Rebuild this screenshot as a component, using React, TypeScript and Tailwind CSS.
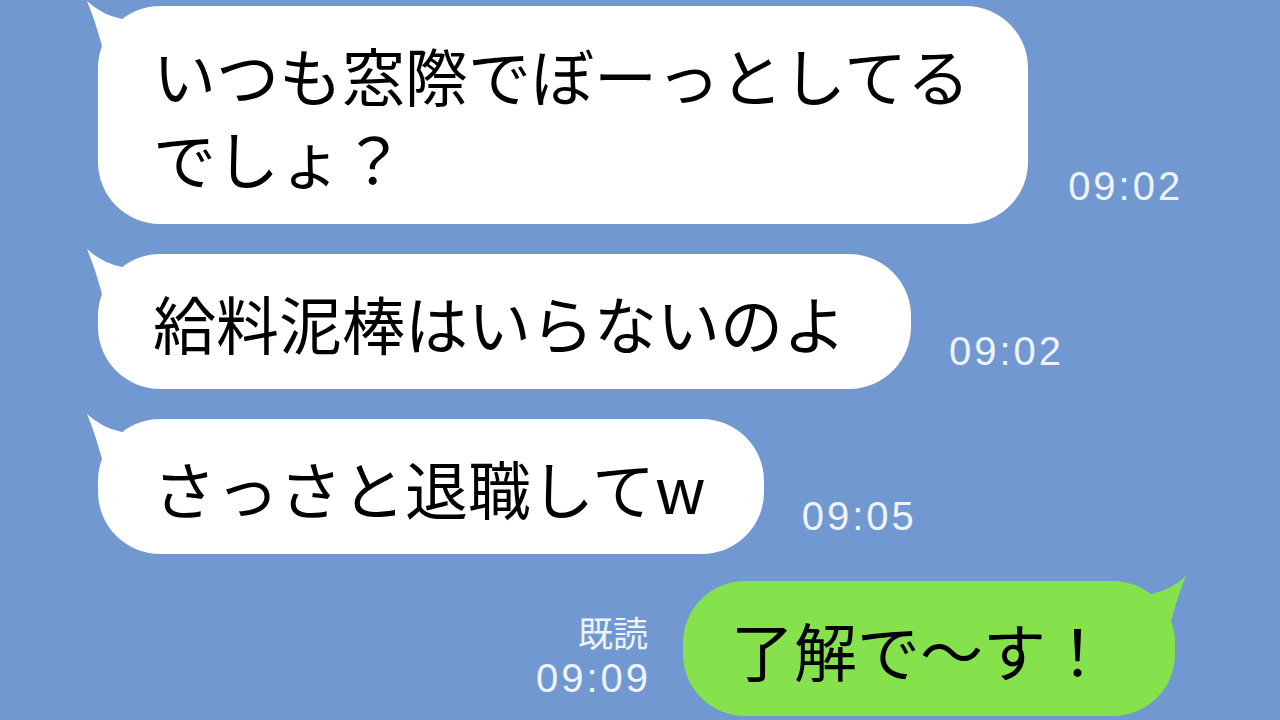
import type { ReactNode } from "react";

const JP = { fontFamily: '"Noto Sans CJK JP", "Noto Sans", sans-serif' };
const TIME = { fontFamily: '"Liberation Sans", "Noto Sans CJK JP", sans-serif' };

function Tail({ side, color }: { side: "left" | "right"; color: string }) {
  // little horn that sticks out of the top corner of a bubble
  const pos = side === "left" ? "left-[-14px] top-[-8px]" : "right-[-14px] top-[-8px] -scale-x-100";
  return (
    <svg className={`absolute h-[50px] w-[50px] ${pos}`} viewBox="0 0 50 50">
      <path d="M3 3 Q 18 17 38 21 L 40 40 L 18 48 Q 11 22 3 3 Z" fill={color} />
    </svg>
  );
}

function Bubble({
  children,
  side,
  pad = "pl-[55px] pr-[55px]",
}: {
  children: ReactNode;
  side: "left" | "right";
  pad?: string;
}) {
  const bg = side === "left" ? "bg-white" : "bg-[#86e24c]";
  return (
    <div
      className={`relative rounded-[62px] ${bg} ${pad} py-[26px] text-[63px] leading-[83px] text-black`}
      style={JP}
    >
      <Tail side={side} color={side === "left" ? "#ffffff" : "#86e24c"} />
      <span className="relative">{children}</span>
    </div>
  );
}

function Time({ t }: { t: string }) {
  return (
    <span className="mb-[18px] text-[40px] leading-[40px] tracking-[3px] text-[#eef3fb]" style={TIME}>
      {t}
    </span>
  );
}

export default function App() {
  return (
    <div className="h-[720px] w-[1280px] overflow-hidden bg-[#7198d0]">
      <div className="flex flex-col pl-[98px] pt-[6px]">
        <div className="flex items-end gap-[40px]">
          <Bubble side="left" pad="pl-[55px] pr-[58px]">
            いつも窓際でぼーっとしてる
            <br />
            でしょ？
          </Bubble>
          <Time t="09:02" />
        </div>

        <div className="mt-[30px] flex items-end gap-[38px]">
          <Bubble side="left" pad="pl-[55px] pr-[65px]">
            給料泥棒はいらないのよ
          </Bubble>
          <Time t="09:02" />
        </div>

        <div className="mt-[30px] flex items-end gap-[38px]">
          <Bubble side="left" pad="pl-[55px] pr-[58px]">
            さっさと退職してw
          </Bubble>
          <Time t="09:05" />
        </div>

        <div className="mt-[27px] flex items-end gap-[35px] pl-[438px]">
          <div className="mb-[12px] flex flex-col items-end text-[#eef3fb]">
            <span className="text-[35px] leading-[40px]" style={JP}>
              既読
            </span>
            <span className="mr-[-3px] text-[40px] leading-[52px] tracking-[3px]" style={TIME}>
              09:09
            </span>
          </div>
          <Bubble side="right" pad="pl-[48px] pr-[66px]">
            了解で〜す！
          </Bubble>
        </div>
      </div>
    </div>
  );
}
